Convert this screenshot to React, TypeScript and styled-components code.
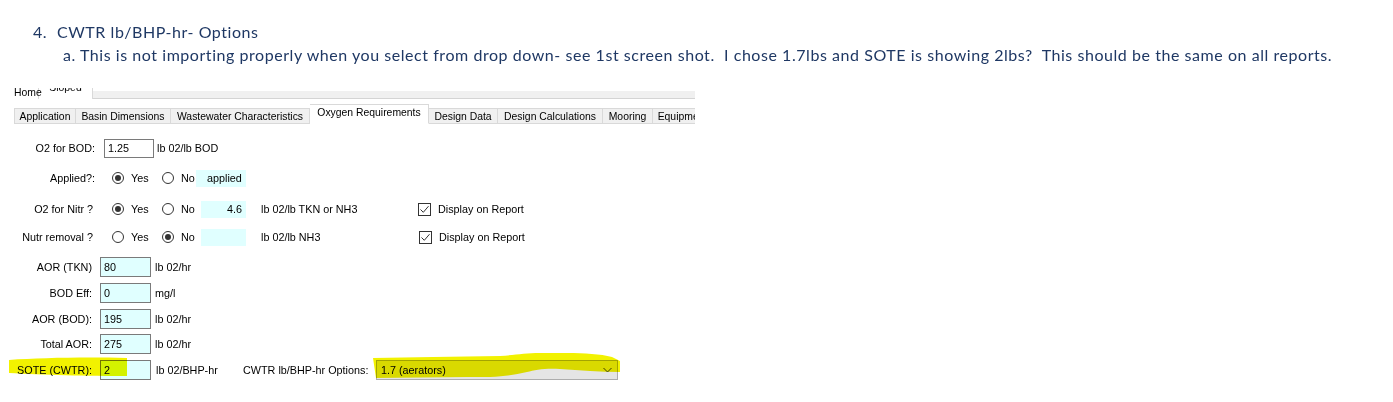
import styled, { createGlobalStyle } from "styled-components";

const GlobalStyle = createGlobalStyle`
  html, body { margin: 0; padding: 0; background: #fff; }
  body { font-family: "Liberation Sans", Arial, sans-serif; }
`;

const Page = styled.div`
  position: relative;
  width: 1393px;
  height: 402px;
  overflow: hidden;
  background: #fff;
`;

const Notes = styled.div`
  padding-top: 20px;
  font-family: Lato, "Liberation Sans", sans-serif;
  font-size: 16px;
  letter-spacing: 0.55px;
  color: #1f3864;
`;

const NoteLine = styled.div<{ $indent: number }>`
  display: flex;
  align-items: center;
  height: 23px;
  padding-left: ${(p) => p.$indent}px;
  white-space: pre;
`;

const Marker = styled.span<{ $w: number }>`
  flex: none;
  width: ${(p) => p.$w}px;
`;

const Shot = styled.div`
  width: 681px;
  margin: 22px 0 0 14px;
  font-size: 10.8px;
  color: #000;
  overflow: hidden;
`;

const TopStrip = styled.div`
  display: flex;
  height: 11px;
  overflow: hidden;
  font-size: 10.4px;
`;

const TopTab = styled.div<{ $w: number; $shift: number }>`
  width: ${(p) => p.$w}px;
  flex: none;
  border-right: 1px solid #d9d9d9;
  box-sizing: border-box;
  text-align: center;
  line-height: 12px;
  margin-top: ${(p) => p.$shift}px;
`;

const TopFill = styled.div`
  flex: 1;
  margin-top: 3px;
  background: #f0f0f0;
  border-bottom: 1px solid #d4d4d4;
`;

const TabRow = styled.div`
  display: flex;
  align-items: flex-end;
  height: 20px;
  margin-top: 5px;
  font-size: 10.4px;
`;

const Tab = styled.div<{ $w: number; $active?: boolean }>`
  flex: none;
  width: ${(p) => p.$w}px;
  height: ${(p) => (p.$active ? 20 : 16)}px;
  box-sizing: border-box;
  display: flex;
  align-items: center;
  justify-content: center;
  white-space: nowrap;
  overflow: hidden;
  background: ${(p) => (p.$active ? "#fff" : "#f0f0f0")};
  border: 1px solid #d9d9d9;
  border-left-width: 0;
  border-bottom-color: ${(p) => (p.$active ? "#fff" : "#d9d9d9")};
  padding-bottom: ${(p) => (p.$active ? 4 : 0)}px;
  &:first-child { border-left-width: 1px; }
`;

const Form = styled.div`
  display: flex;
  flex-direction: column;
  padding-top: 14px;
  padding-bottom: 20px;
`;

const Row = styled.div<{ $mt: number }>`
  display: flex;
  align-items: center;
  height: 20px;
  margin-top: ${(p) => p.$mt}px;
  white-space: nowrap;
`;

const Label = styled.div<{ $w: number }>`
  flex: none;
  width: ${(p) => p.$w}px;
  text-align: right;
`;

const TextBox = styled.div<{ $w: number; $h: number; $ml: number }>`
  flex: none;
  box-sizing: border-box;
  width: ${(p) => p.$w}px;
  height: ${(p) => p.$h}px;
  margin-left: ${(p) => p.$ml}px;
  padding-left: 3px;
  border: 1px solid #7a7a7a;
  background: ${(p) => (p.$h === 19 ? "#fff" : "#e0ffff")};
  display: flex;
  align-items: center;
`;

const Output = styled.div<{ $w: number; $ml: number; $align: string }>`
  flex: none;
  box-sizing: border-box;
  width: ${(p) => p.$w}px;
  height: 17px;
  margin-left: ${(p) => p.$ml}px;
  padding: 0 4px 0 11px;
  background: #e0ffff;
  display: flex;
  align-items: center;
  justify-content: ${(p) => p.$align};
`;

const Unit = styled.div<{ $ml: number; $w?: number }>`
  flex: none;
  margin-left: ${(p) => p.$ml}px;
  width: ${(p) => (p.$w ? `${p.$w}px` : "auto")};
`;

const Radios = styled.div<{ $ml: number }>`
  display: flex;
  margin-left: ${(p) => p.$ml}px;
`;

const RadioOpt = styled.div<{ $w: number }>`
  flex: none;
  width: ${(p) => p.$w}px;
  display: flex;
  align-items: center;
  gap: 7px;
`;

const Circle = styled.span<{ $on?: boolean }>`
  position: relative;
  width: 12px;
  height: 12px;
  box-sizing: border-box;
  border: 1px solid #333;
  border-radius: 50%;
  background: #fff;
  &::after {
    content: "";
    display: ${(p) => (p.$on ? "block" : "none")};
    position: absolute;
    left: 2px;
    top: 2px;
    width: 6px;
    height: 6px;
    border-radius: 50%;
    background: #333;
  }
`;

const Check = styled.div`
  display: flex;
  align-items: center;
  gap: 7px;
`;

const Box = styled.span`
  display: inline-flex;
  width: 13px;
  height: 13px;
  box-sizing: border-box;
  border: 1px solid #333;
  background: #fff;
`;

const Select = styled.div`
  flex: none;
  width: 242px;
  height: 20px;
  box-sizing: border-box;
  border: 1px solid #adadad;
  background: #e5e5e5;
  display: flex;
  align-items: center;
  justify-content: space-between;
  padding: 0 5px 0 4px;
`;

const Marks = styled.svg`
  position: absolute;
  left: 0;
  top: 0;
  pointer-events: none;
  mix-blend-mode: multiply;
`;

function Radio({ yes }: { yes: boolean }) {
  return (
    <>
      <RadioOpt $w={50}>
        <Circle $on={yes} />
        Yes
      </RadioOpt>
      <RadioOpt $w={34}>
        <Circle $on={!yes} />
        No
      </RadioOpt>
    </>
  );
}

function ReportCheck() {
  return (
    <Check>
      <Box>
        <svg width="11" height="11" viewBox="0 0 11 11">
          <polyline points="1.5,5.5 4.3,8.3 9.5,2.2" fill="none" stroke="#333" strokeWidth="1" />
        </svg>
      </Box>
      Display on Report
    </Check>
  );
}

const tabs: [string, number][] = [
  ["Application", 62],
  ["Basin Dimensions", 95],
  ["Wastewater Characteristics", 139],
  ["Oxygen Requirements", 119],
  ["Design Data", 69],
  ["Design Calculations", 105],
  ["Mooring", 50],
  ["Equipment", 60],
];

const plain: [string, string, string, number][] = [
  ["AOR (TKN)", "80", "lb 02/hr", 10],
  ["BOD Eff:", "0", "mg/l", 6],
  ["AOR (BOD):", "195", "lb 02/hr", 6],
  ["Total AOR:", "275", "lb 02/hr", 5],
];

export default function App() {
  return (
    <Page>
      <GlobalStyle />
      <Notes>
        <NoteLine $indent={33}>
          <Marker $w={24}>4.</Marker>
          CWTR lb/BHP-hr- Options
        </NoteLine>
        <NoteLine $indent={63}>
          <Marker $w={17}>a.</Marker>
          This is not importing properly when you select from drop down- see 1st screen shot.  I chose 1.7lbs and SOTE is showing 2lbs?  This should be the same on all reports.
        </NoteLine>
      </Notes>

      <Shot>
        <TopStrip>
          <TopTab $w={25} $shift={-1}>Home</TopTab>
          <TopTab $w={54} $shift={-6}>Sloped</TopTab>
          <TopFill />
        </TopStrip>

        <TabRow>
          {tabs.map(([name, w]) => (
            <Tab key={name} $w={w} $active={name === "Oxygen Requirements"}>
              {name}
            </Tab>
          ))}
        </TabRow>

        <Form>
          <Row $mt={0}>
            <Label $w={81}>O2 for BOD:</Label>
            <TextBox $w={50} $h={19} $ml={9}>1.25</TextBox>
            <Unit $ml={3}>lb 02/lb BOD</Unit>
          </Row>
          <Row $mt={10}>
            <Label $w={81}>Applied?:</Label>
            <Radios $ml={17}>
              <Radio yes />
            </Radios>
            <Output $w={50} $ml={0} $align="flex-start">applied</Output>
          </Row>
          <Row $mt={11}>
            <Label $w={79}>O2 for Nitr ?</Label>
            <Radios $ml={19}>
              <Radio yes />
            </Radios>
            <Output $w={45} $ml={5} $align="flex-end">4.6</Output>
            <Unit $ml={15} $w={157}>lb 02/lb TKN or NH3</Unit>
            <ReportCheck />
          </Row>
          <Row $mt={8}>
            <Label $w={79}>Nutr removal ?</Label>
            <Radios $ml={19}>
              <Radio yes={false} />
            </Radios>
            <Output $w={45} $ml={5} $align="flex-end" />
            <Unit $ml={15} $w={158}>lb 02/lb NH3</Unit>
            <ReportCheck />
          </Row>
          {plain.map(([label, value, unit, mt]) => (
            <Row key={label} $mt={mt}>
              <Label $w={78}>{label}</Label>
              <TextBox $w={51} $h={20} $ml={8}>{value}</TextBox>
              <Unit $ml={4}>{unit}</Unit>
            </Row>
          ))}
          <Row $mt={6}>
            <Label $w={78}>SOTE (CWTR):</Label>
            <TextBox $w={51} $h={20} $ml={8}>2</TextBox>
            <Unit $ml={5} $w={87}>lb 02/BHP-hr</Unit>
            <Unit $ml={0} $w={133}>CWTR lb/BHP-hr Options:</Unit>
            <Select>
              <span>1.7 (aerators)</span>
              <svg width="9" height="6" viewBox="0 0 9 6">
                <polyline points="0.5,1 4.5,5 8.5,1" fill="none" stroke="#444" strokeWidth="1" />
              </svg>
            </Select>
          </Row>
        </Form>
      </Shot>

      <Marks width="1393" height="402" viewBox="0 0 1393 402">
        <path
          d="M9,360 C40,358 80,357 127,358 L127,376 C90,376 40,375 9,373 Z"
          fill="#f2f200"
        />
        <path
          d="M373,358 L433,357 L500,356 C515,355 525,353 540,353 L567,353 C585,353 600,354 612,357 L620,361 L620,372 C600,372 580,370 560,369 C545,368 535,370 527,372 C515,375 505,376 490,377 L467,377 L376,378 Z"
          fill="#f2f200"
        />
      </Marks>
    </Page>
  );
}
